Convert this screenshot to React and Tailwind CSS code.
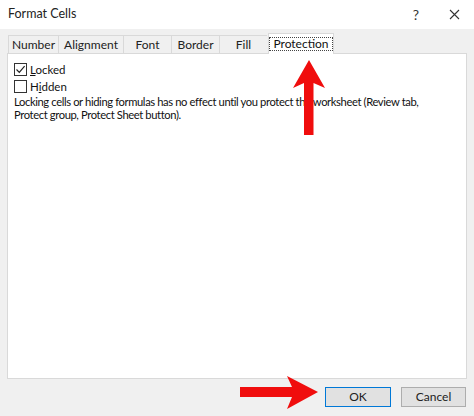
import React from "react";

const tabs = ["Number", "Alignment", "Font", "Border", "Fill"];
const tabWidths = ["w-[50px]", "w-[65px]", "w-[48px]", "w-[48px]", "w-[48px]"];

const CheckBox = ({ checked }) => (
  <span className="flex h-[13px] w-[13px] shrink-0 items-center justify-center border border-[#333] bg-white">
    {checked && (
      <svg width="11" height="11" viewBox="0 0 11 11">
        <path d="M1.5 5.5 L4.3 8.3 L9.6 2.2" fill="none" stroke="#222" strokeWidth="1.2" />
      </svg>
    )}
  </span>
);

const Arrows = () => (
  <svg className="pointer-events-none absolute inset-0" width="474" height="416" viewBox="0 0 474 416">
    <polygon
      points="309,60 325,88 313.5,83 313.5,135 304,135 304,83 293,88"
      fill="#f00d0d"
    />
    <polygon
      points="240,387 292,387 287,376 318,392 287,409 292,397 240,397"
      fill="#f00d0d"
    />
  </svg>
);

export default function App() {
  return (
    <div
      className="relative flex h-[416px] w-[474px] flex-col overflow-hidden bg-[#f0f0f0] text-[11.5px] text-[#111]"
      style={{ fontFamily: 'Lato, "Noto Sans", sans-serif' }}
    >
      <div className="flex h-[29px] items-center bg-white pl-[8px] pr-[14px]">
        <span className="text-[12.5px] text-[#222]">Format Cells</span>
        <span className="ml-auto mr-[30px] text-[14px] text-[#333]">?</span>
        <svg width="11" height="11" viewBox="0 0 11 11">
          <path d="M1 1 L10 10 M10 1 L1 10" stroke="#333" strokeWidth="1.1" />
        </svg>
      </div>

      <div className="flex flex-1 flex-col px-[7px]">
        <div className="mt-[4px] flex items-end pl-[1px]">
          {tabs.map((t, i) => (
            <div
              key={t}
              className={`flex h-[18px] items-center justify-center border-t border-l border-[#d9d9d9] bg-[#f0f0f0] text-[12px] text-[#222] ${tabWidths[i]}`}
            >
              {t}
            </div>
          ))}
          <div className="relative z-10 -mb-px ml-[1px] flex h-[21px] w-[66px] items-center justify-center border border-b-0 border-[#d9d9d9] bg-white">
            <span className="border border-dotted border-[#444] px-[3px] text-[12px] leading-[12px]">Protection</span>
          </div>
        </div>

        <div className="h-[326px] border border-[#d9d9d9] bg-white px-[6px] pt-[9px]">
          <div className="flex h-[13px] items-center gap-[3px] leading-[13px]">
            <CheckBox checked />
            <span>
              <span className="underline">L</span>ocked
            </span>
          </div>
          <div className="mt-[4px] flex h-[13px] items-center gap-[3px] leading-[13px]">
            <CheckBox />
            <span>
              H<span className="underline">i</span>dden
            </span>
          </div>
          <p className="mt-[2px] text-[11.2px] leading-[13px] tracking-[-0.38px]">
            Locking cells or hiding formulas has no effect until you protect the worksheet (Review tab,
            <br />
            Protect group, Protect Sheet button).
          </p>
        </div>

        <div className="mt-[8px] flex justify-end gap-[10px] pr-[1px]">
          <button className="h-[20px] w-[66px] border border-[#0078d7] bg-[#e1e1e1] text-[12px] text-[#222]">
            OK
          </button>
          <button className="h-[20px] w-[65px] border border-[#adadad] bg-[#e1e1e1] text-[12px] text-[#222]">
            Cancel
          </button>
        </div>
      </div>

      <Arrows />
    </div>
  );
}
